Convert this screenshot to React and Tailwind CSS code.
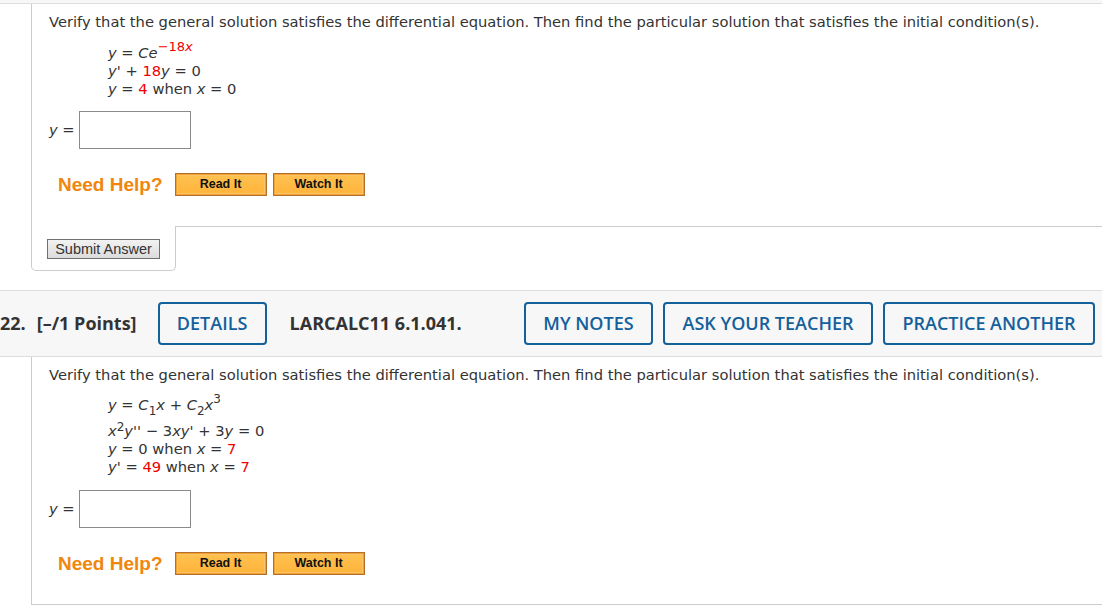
import React from "react";

const txt = { fontFamily: '"DejaVu Sans", Verdana, sans-serif' };
const arial = { fontFamily: '"Liberation Sans", Arial, sans-serif' };
const open = { fontFamily: '"Open Sans", sans-serif' };

function R({ children }) {
  return <span className="text-[#ee0000]">{children}</span>;
}
function I({ children }) {
  return <span className="italic">{children}</span>;
}

function OrangeBtn({ label }) {
  return (
    <div className="w-[92px] h-[23px] border border-[#b3702d] bg-[#f39f2e] p-[1px]">
      <div
        className="w-full h-full border border-[#f8c46a] bg-gradient-to-b from-[#ffc04e] to-[#ffb53c] flex items-center justify-center text-[12.5px] font-bold text-[#111] leading-none"
        style={arial}
      >
        {label}
      </div>
    </div>
  );
}

function NeedHelp() {
  return (
    <div className="flex items-center ml-[9px]">
      <span className="text-[19px] font-bold text-[#f0860c] mr-[12px] leading-none" style={arial}>
        Need Help?
      </span>
      <div className="flex gap-[6px]">
        <OrangeBtn label="Read It" />
        <OrangeBtn label="Watch It" />
      </div>
    </div>
  );
}

function Answer() {
  return (
    <div className="flex items-center">
      <span className="text-[14.7px] text-[#333] w-[30px]" style={txt}>
        <I>y</I> =
      </span>
      <div className="w-[112px] h-[38px] border border-[#8a8a8a] bg-white"></div>
    </div>
  );
}

const prompt =
  "Verify that the general solution satisfies the differential equation. Then find the particular solution that satisfies the initial condition(s).";

function HdrBtn({ label, w }) {
  return (
    <div
      className={`${w} h-[43px] border-2 border-[#13609b] rounded-[4px] flex items-center justify-center text-[18px] font-semibold text-[#13609b]`}
      style={open}
    >
      {label}
    </div>
  );
}

function Sup({ children, size = "text-[12px]", up = "-top-[7px]" }) {
  return <span className={`relative ${up} ${size} leading-none`}>{children}</span>;
}

export default function App() {
  return (
    <div className="w-[1102px] h-[613px] bg-white overflow-hidden text-[#333]">
      <div className="h-[4px] bg-[#f7f7f7] border-b border-[#dedede]"></div>

      {/* Question 1 */}
      <div className="ml-[31px] border-l border-[#cccccc] pl-[17px] pt-[9px] pb-[30px]">
        <div className="text-[14.7px] leading-[18px] whitespace-nowrap" style={txt}>{prompt}</div>
        <div className="ml-[59px] mt-[13px] text-[14.7px] leading-[18px]" style={txt}>
          <div>
            <I>y</I> = <I>Ce</I>
            <Sup size="text-[13px] text-[#ee0000]" up="-top-[7px]">
              −18<I>x</I>
            </Sup>
          </div>
          <div>
            <I>y</I>' + <R>18</R><I>y</I> = 0
          </div>
          <div>
            <I>y</I> = <R>4</R> when <I>x</I> = 0
          </div>
        </div>
        <div className="mt-[13px]">
          <Answer />
        </div>
        <div className="mt-[24px]">
          <NeedHelp />
        </div>
      </div>
      <div className="flex items-start">
        <div className="ml-[31px] w-[145px] h-[45px] border-l border-r border-b border-[#cccccc] rounded-b-[5px] pt-[13px] pl-[15px]">
          <div
            className="w-[113px] h-[20px] border border-[#707070] bg-gradient-to-b from-[#f2f2f2] to-[#dcdcdc] flex items-center justify-center text-[14.5px] text-[#333] leading-none"
            style={arial}
          >
            Submit Answer
          </div>
        </div>
        <div className="flex-1 border-t border-[#cccccc]"></div>
      </div>

      {/* Header */}
      <div className="mt-[19px] h-[67px] bg-[#f7f7f7] border-t border-b border-[#dddddd] flex items-center pr-[7px]" style={open}>
        <span className="text-[18px] font-bold text-[#333]">22.</span>
        <span className="ml-[11px] text-[18px] font-bold text-[#333]">[–/1 Points]</span>
        <div className="ml-[21px]">
          <HdrBtn label="DETAILS" w="w-[109px]" />
        </div>
        <span className="ml-[23px] text-[18px] font-bold text-[#333]">LARCALC11 6.1.041.</span>
        <div className="ml-auto flex gap-[10px]">
          <HdrBtn label="MY NOTES" w="w-[129px]" />
          <HdrBtn label="ASK YOUR TEACHER" w="w-[210px]" />
          <HdrBtn label="PRACTICE ANOTHER" w="w-[212px]" />
        </div>
      </div>

      {/* Question 2 */}
      <div className="ml-[31px] border-l border-b border-[#cccccc] pl-[17px] pt-[9px] pb-[29px]">
        <div className="text-[14.7px] leading-[18px] whitespace-nowrap" style={txt}>{prompt}</div>
        <div className="ml-[59px] mt-[12px] text-[14.7px] leading-[18px]" style={txt}>
          <div className="mb-[8px]">
            <I>y</I> = <I>C</I>
            <Sup up="top-[5px]">1</Sup>
            <I>x</I> + <I>C</I>
            <Sup up="top-[5px]">2</Sup>
            <I>x</I>
            <Sup up="-top-[7px]">3</Sup>
          </div>
          <div>
            <I>x</I>
            <Sup up="-top-[5px]">2</Sup>
            <I>y</I>'' − 3<I>xy</I>' + 3<I>y</I> = 0
          </div>
          <div>
            <I>y</I> = 0 when <I>x</I> = <R>7</R>
          </div>
          <div>
            <I>y</I>' = <R>49</R> when <I>x</I> = <R>7</R>
          </div>
        </div>
        <div className="mt-[14px]">
          <Answer />
        </div>
        <div className="mt-[24px]">
          <NeedHelp />
        </div>
      </div>
    </div>
  );
}
